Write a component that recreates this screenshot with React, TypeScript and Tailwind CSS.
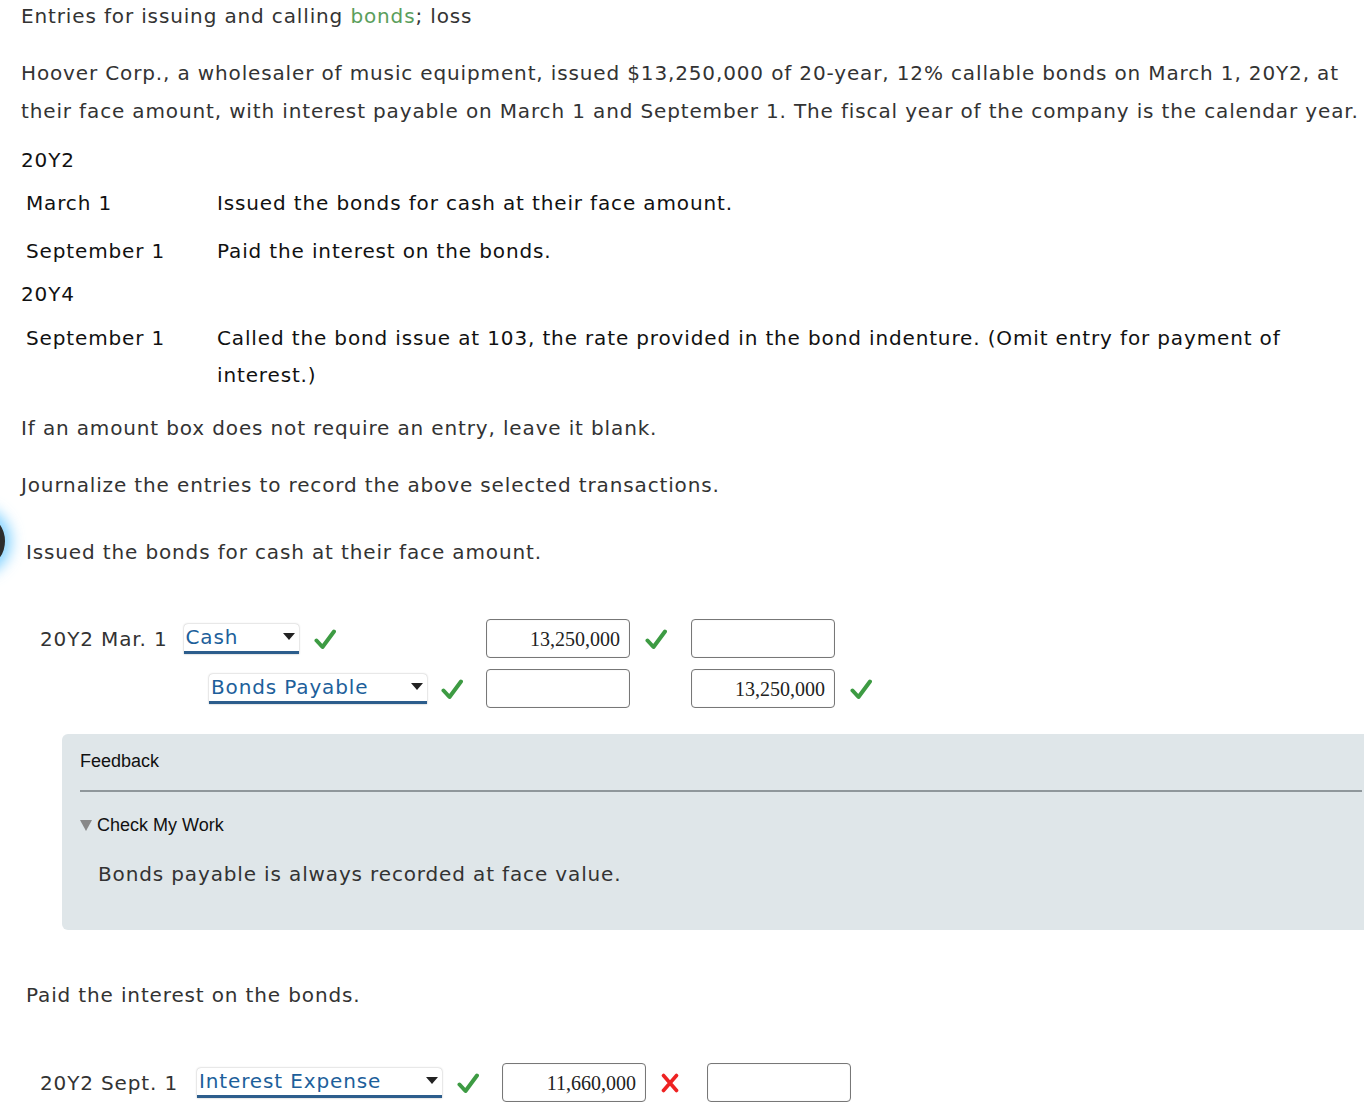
import type { ReactNode } from 'react';

const body = "font-['DejaVu_Sans',Verdana,sans-serif] tracking-[0.86px]";

function Check() {
  return (
    <svg width="22" height="22" viewBox="0 0 22 22" className="shrink-0">
      <path d="M2.5 12.5 L8.5 19 L20 3.5" fill="none" stroke="#3d9b43" strokeWidth="4" strokeLinecap="round" strokeLinejoin="round" />
    </svg>
  );
}

function Cross() {
  return (
    <svg width="18" height="20" viewBox="0 0 18 20" className="shrink-0">
      <path d="M2.5 2.5 L15.5 17.5 M15.5 2.5 L2.5 17.5" fill="none" stroke="#ee2222" strokeWidth="3.6" strokeLinecap="round" />
    </svg>
  );
}

function AccountSelect({ label, width }: { label: string; width: string }) {
  return (
    <div
      className={`flex h-[30px] items-center justify-between rounded-t-[4px] border-b-[3px] border-[#2c5d8c] bg-white pl-[2px] pr-[4px] shadow-[0_0_2px_rgba(0,0,0,0.35)] ${width}`}
    >
      <span className={`${body} text-[20px] leading-[26px] text-[#1d5f9b]`}>{label}</span>
      <span className="mt-[-2px] h-0 w-0 border-x-[6px] border-t-[7px] border-x-transparent border-t-[#222]" />
    </div>
  );
}

function Amount({ value }: { value?: string }) {
  return (
    <div className="flex h-[39px] w-[144px] items-center justify-end rounded-[4px] border border-[#777] bg-white pr-[9px] shadow-[inset_0_0_1px_rgba(0,0,0,0.2)] font-['Liberation_Serif',serif] text-[20px] tracking-normal text-[#222]">
      {value}
    </div>
  );
}

function Slot({ children, width = 'w-[61px]' }: { children?: ReactNode; width?: string }) {
  return <div className={`flex items-center pl-[15px] ${width}`}>{children}</div>;
}

function ScheduleRow({ date, text, height, top = 0 }: { date: string; text: ReactNode; height: string; top?: number }) {
  return (
    <div className={`flex ${height}`} style={{ paddingTop: top }}>
      <div className="w-[196px] pl-[5px]">{date}</div>
      <div className="flex-1 pr-[60px]">{text}</div>
    </div>
  );
}

export default function App() {
  return (
    <div className={`relative min-h-screen w-full overflow-hidden bg-white ${body} text-[20px] text-[#333]`}>
      <div className="pointer-events-none absolute left-[-53px] top-[512px] h-[58px] w-[58px] rounded-full border-[5px] border-[#2d2d2d] bg-white shadow-[0_0_14px_6px_rgba(90,195,255,0.75)]" />

      <div className="pl-[21px]">
        <h1 className="h-[32px] text-[20px] font-normal leading-[32px]">
          Entries for issuing and calling <span className="text-[#5a9e5c]">bonds</span>; loss
        </h1>

        <p className="mt-[22px] leading-[38px]">
          Hoover Corp., a wholesaler of music equipment, issued $13,250,000 of 20-year, 12% callable bonds on March 1, 20Y2, at their face amount, with interest payable on March 1 and September 1. The fiscal year of the company is the calendar year.
        </p>

        <div className="mt-[10px] leading-[37px] text-[#111]">
          <div className="flex h-[40px] items-center">20Y2</div>
          <ScheduleRow height="h-[46px]" top={5} date="March 1" text="Issued the bonds for cash at their face amount." />
          <ScheduleRow height="h-[50px]" top={7} date="September 1" text="Paid the interest on the bonds." />
          <div className="flex h-[36px] items-center">20Y4</div>
          <ScheduleRow
            height="h-[84px]"
            top={8}
            date="September 1"
            text="Called the bond issue at 103, the rate provided in the bond indenture. (Omit entry for payment of interest.)"
          />
        </div>

        <p className="mt-[14px] leading-[37px]">If an amount box does not require an entry, leave it blank.</p>
        <p className="mt-[20px] leading-[37px]">Journalize the entries to record the above selected transactions.</p>
      </div>

      <p className="mt-[30px] pl-[26px] leading-[37px]">Issued the bonds for cash at their face amount.</p>

      <div className="mt-[48px] flex flex-col gap-[11px] pl-[40px]">
        <div className="flex items-center">
          <div className="flex w-[446px] items-center">
            <span className="mr-[16px] text-[#333]">20Y2 Mar. 1</span>
            <AccountSelect label="Cash" width="w-[115px]" />
            <span className="ml-[15px]">
              <Check />
            </span>
          </div>
          <Amount value="13,250,000" />
          <Slot>
            <Check />
          </Slot>
          <Amount />
        </div>
        <div className="flex items-center">
          <div className="flex w-[446px] items-center pl-[169px]">
            <AccountSelect label="Bonds Payable" width="w-[218px]" />
            <span className="ml-[14px]">
              <Check />
            </span>
          </div>
          <Amount />
          <Slot />
          <Amount value="13,250,000" />
          <Slot>
            <Check />
          </Slot>
        </div>
      </div>

      <div className="ml-[62px] mt-[26px] h-[196px] rounded-l-[6px] bg-[#dfe6e9] pl-[18px] pr-[2px] pt-[15px]">
        <div className="font-['Liberation_Sans',Arial,sans-serif] text-[18px] leading-[24px] tracking-normal text-[#111]">Feedback</div>
        <div className="mt-[17px] h-[2px] bg-[#8f979b]" />
        <div className="mt-[21px] flex items-center font-['Liberation_Sans',Arial,sans-serif] text-[18px] leading-[24px] tracking-normal text-[#111]">
          <span className="mr-[5px] h-0 w-0 border-x-[6px] border-t-[11px] border-x-transparent border-t-[#888]" />
          Check My Work
        </div>
        <p className="mt-[20px] pl-[18px] leading-[34px] text-[#333]">Bonds payable is always recorded at face value.</p>
      </div>

      <p className="mt-[47px] pl-[26px] leading-[37px]">Paid the interest on the bonds.</p>

      <div className="mt-[49px] flex items-center pl-[40px]">
        <div className="flex w-[462px] items-center">
          <span className="mr-[19px] text-[#333]">20Y2 Sept. 1</span>
          <AccountSelect label="Interest Expense" width="w-[245px]" />
          <span className="ml-[15px]">
            <Check />
          </span>
        </div>
        <Amount value="11,660,000" />
        <Slot>
          <Cross />
        </Slot>
        <Amount />
      </div>
    </div>
  );
}
